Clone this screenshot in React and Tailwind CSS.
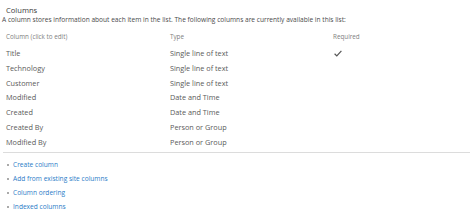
import React from "react";

const rows = [
  ["Title", "Single line of text", true],
  ["Technology", "Single line of text", false],
  ["Customer", "Single line of text", false],
  ["Modified", "Date and Time", false],
  ["Created", "Date and Time", false],
  ["Created By", "Person or Group", false],
  ["Modified By", "Person or Group", false],
];

const links = [
  "Create column",
  "Add from existing site columns",
  "Column ordering",
  "Indexed columns",
];

export default function App() {
  return (
    <div
      className="w-[474px] h-[215px] bg-white overflow-hidden text-[#444]"
      style={{ fontFamily: '"Open Sans", "Noto Sans", sans-serif' }}
    >
      <div className="pl-[6px] pt-[4px] h-[12px] text-[7.6px] leading-[12px] text-[#3a3a3a]">
        Columns
      </div>
      <div className="pl-[2px] mt-[3px] h-[10px] text-[6.6px] leading-[10px] text-[#4a4a4a] whitespace-nowrap">
        A column stores information about each item in the list. The following columns are currently available in this list:
      </div>
      <div className="grid grid-cols-[164px_163px_1fr] pl-[6px] mt-[7px] h-[10px] text-[6.3px] leading-[10px] text-[#808080]">
        <div>Column (click to edit)</div>
        <div>Type</div>
        <div>Required</div>
      </div>
      <div className="mt-[4px]">
        {rows.map(([name, type, req]) => (
          <div
            key={name}
            className="grid grid-cols-[164px_163px_1fr] pl-[6px] h-[14.83px] text-[7.3px] leading-[14.83px] text-[#5a5a5a]"
          >
            <div>{name}</div>
            <div>{type}</div>
            <div className="flex items-center">
              {req && (
                <svg width="8" height="7" viewBox="0 0 8 7" className="ml-[1px]">
                  <path d="M0.6 3.8 L2.8 5.9 L7.4 0.8" fill="none" stroke="#555" strokeWidth="1.2" />
                </svg>
              )}
            </div>
          </div>
        ))}
      </div>
      <div className="ml-[3px] mr-[4px] mt-[2px] h-[1.5px] bg-[#dcdcdc]" />
      <div className="mt-[5px]">
        {links.map((l) => (
          <div key={l} className="flex items-center pl-[7px] h-[13.9px] text-[6.6px] text-[#2a7cc7]">
            <span className="w-[2px] h-[2px] bg-[#aaa] mr-[4px]" />
            <span>{l}</span>
          </div>
        ))}
      </div>
    </div>
  );
}
